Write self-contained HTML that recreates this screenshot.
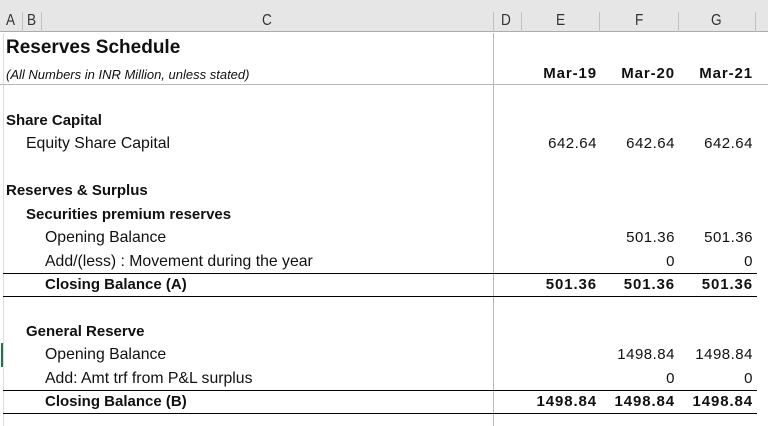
<!DOCTYPE html>
<html><head><style>
*{margin:0;padding:0;box-sizing:border-box}
body{width:768px;height:426px;background:#fff;position:relative;overflow:hidden;font-family:"Liberation Sans",sans-serif;color:#111}
.hdr{position:absolute;left:0;top:0;width:768px;height:32px;background:#e6e6e6;border-bottom:1px solid #ababab}
.cs{position:absolute;top:12px;width:1px;height:20px;background:#c0c0c0}
.cl{position:absolute;top:12px;font-size:16px;color:#333;transform:scaleX(.85);transform-origin:left}
.t{position:absolute;font-size:15.8px;white-space:nowrap;line-height:18px}
.b{font-weight:bold;font-size:15px}
.r{text-align:right}
.n{letter-spacing:.5px;font-size:15px}
.b.n{font-size:15px;letter-spacing:.9px}
.hl{position:absolute;left:3px;width:754px;height:1px;background:#000}
.gl{position:absolute;height:1px;background:#b8b8b8}
</style></head><body>
<div class="hdr"></div>
<div class="cs" style="left:22px"></div><div class="cs" style="left:41px"></div><div class="cs" style="left:493px"></div><div class="cs" style="left:521px"></div><div class="cs" style="left:599px"></div><div class="cs" style="left:678px"></div><div class="cs" style="left:755px"></div>
<div class="cl" style="left:6px">A</div><div class="cl" style="left:27px">B</div><div class="cl" style="left:262px">C</div><div class="cl" style="left:501px">D</div><div class="cl" style="left:556px">E</div><div class="cl" style="left:635px">F</div><div class="cl" style="left:711px">G</div>
<div style="position:absolute;left:3px;top:33px;width:1px;height:393px;background:#ddd"></div>
<div style="position:absolute;left:493px;top:33px;width:1px;height:393px;background:#b8b8b8"></div>
<div style="position:absolute;left:1px;top:343px;width:2px;height:24px;background:#217346"></div>
<div class="gl" style="left:0;width:768px;top:84px"></div>
<div class="t" style="left:6px;top:36px;font-size:19px;line-height:24px;font-weight:bold">Reserves Schedule</div>
<div class="t" style="left:6px;top:66px;font-size:13px;font-style:italic">(All Numbers in INR Million, unless stated)</div>
<div class="t b r n" style="left:500px;width:97px;top:65px">Mar-19</div>
<div class="t b r n" style="left:578px;width:97px;top:65px">Mar-20</div>
<div class="t b r n" style="left:656px;width:97px;top:65px">Mar-21</div>
<div class="t b" style="left:6px;top:112px">Share Capital</div>
<div class="t" style="left:26px;top:135px">Equity Share Capital</div>
<div class="t r n" style="left:500px;width:97px;top:135px">642.64</div>
<div class="t r n" style="left:578px;width:97px;top:135px">642.64</div>
<div class="t r n" style="left:656px;width:97px;top:135px">642.64</div>
<div class="t b" style="left:6px;top:182px">Reserves &amp; Surplus</div>
<div class="t b" style="left:26px;top:206px">Securities premium reserves</div>
<div class="t" style="left:45px;top:229px">Opening Balance</div>
<div class="t r n" style="left:578px;width:97px;top:229px">501.36</div>
<div class="t r n" style="left:656px;width:97px;top:229px">501.36</div>
<div class="t" style="left:45px;top:253px">Add/(less) : Movement during the year</div>
<div class="t r n" style="left:578px;width:97px;top:253px">0</div>
<div class="t r n" style="left:656px;width:97px;top:253px">0</div>
<div class="hl" style="top:273px"></div>
<div class="t b" style="left:45px;top:276px">Closing Balance (A)</div>
<div class="t b r n" style="left:500px;width:97px;top:276px">501.36</div>
<div class="t b r n" style="left:578px;width:97px;top:276px">501.36</div>
<div class="t b r n" style="left:656px;width:97px;top:276px">501.36</div>
<div class="hl" style="top:296px"></div>
<div class="t b" style="left:26px;top:323px">General Reserve</div>
<div class="t" style="left:45px;top:346px">Opening Balance</div>
<div class="t r n" style="left:578px;width:97px;top:346px">1498.84</div>
<div class="t r n" style="left:656px;width:97px;top:346px">1498.84</div>
<div class="t" style="left:45px;top:370px">Add: Amt trf from P&amp;L surplus</div>
<div class="t r n" style="left:578px;width:97px;top:370px">0</div>
<div class="t r n" style="left:656px;width:97px;top:370px">0</div>
<div class="hl" style="top:390px"></div>
<div class="t b" style="left:45px;top:393px">Closing Balance (B)</div>
<div class="t b r n" style="left:500px;width:97px;top:393px">1498.84</div>
<div class="t b r n" style="left:578px;width:97px;top:393px">1498.84</div>
<div class="t b r n" style="left:656px;width:97px;top:393px">1498.84</div>
<div class="hl" style="top:413px"></div>
</body></html>
